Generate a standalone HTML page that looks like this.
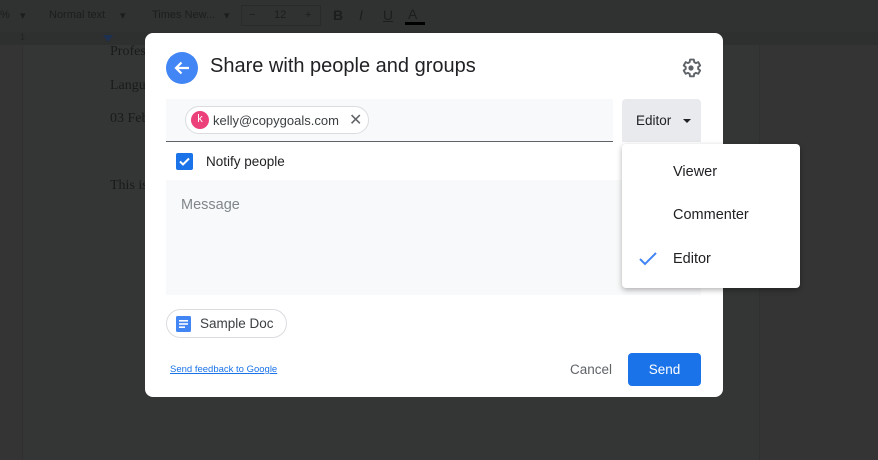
<!DOCTYPE html>
<html><head><meta charset="utf-8"><style>
*{box-sizing:border-box;margin:0;padding:0}
body{width:878px;height:460px;overflow:hidden;background:#333433;font-family:"Liberation Sans",Arial,sans-serif;position:relative}
.tb{position:absolute;left:0;top:0;width:878px;height:32px;background:#303131;color:#1c1d1d;font-size:11px}
.tb span{position:absolute;top:9px}
.ruler{position:absolute;left:0;top:32px;width:878px;height:13px;background:#2e2f2f}
.doc{position:absolute;left:22px;top:45px;width:738px;height:415px;background:#343535;border-left:1px solid #303030;border-right:1px solid #303030}
.dt{position:absolute;font-family:"Liberation Serif",serif;font-size:14px;color:#1a1a1a}
.dlg{position:absolute;left:145px;top:33px;width:578px;height:364px;background:#fff;border-radius:8px}
.a{position:absolute}
.menu{position:absolute;left:622px;top:144px;width:178px;height:144px;background:#fff;border-radius:4px;box-shadow:0 2px 6px rgba(0,0,0,.3);font-size:14.5px;color:#202124}
</style></head><body>
<div class="tb">
<span style="left:0">%</span><span style="left:20px">▾</span>
<span style="left:49px">Normal text</span><span style="left:120px">▾</span>
<span style="left:152px">Times New...</span><span style="left:224px">▾</span>
<div style="position:absolute;left:241px;top:5px;width:80px;height:21px;border:1px solid #2a2a2a"></div>
<span style="left:249px">−</span><span style="left:274px">12</span><span style="left:305px">+</span>
<span style="left:333px;font-weight:bold;font-size:14px;top:7px">B</span><span style="left:359px;font-style:italic;font-size:14px;top:7px">I</span><span style="left:383px;text-decoration:underline;font-size:14px;top:7px">U</span><span style="left:408px;font-size:14px;top:6px">A</span>
<div style="position:absolute;left:405px;top:22px;width:20px;height:3px;background:#000"></div>
</div>
<div class="ruler"><span style="position:absolute;left:20px;top:0;font-size:9px;color:#222">1</span><div style="position:absolute;left:103px;top:3px;border-left:5px solid transparent;border-right:5px solid transparent;border-top:7px solid #1d3050"></div></div>
<div class="doc"></div>
<div class="dt" style="left:110px;top:44px">Profes</div>
<div class="dt" style="left:110px;top:78px">Langu</div>
<div class="dt" style="left:110px;top:111px">03 Feb</div>
<div class="dt" style="left:110px;top:178px">This is</div>

<div class="dlg">
<div class="a" style="left:21px;top:19px;width:32px;height:32px;border-radius:50%;background:#4285f4">
<svg width="32" height="32" viewBox="0 0 32 32"><path d="M23 16H10M15.5 10.5L10 16l5.5 5.5" stroke="#fff" stroke-width="2.2" fill="none"/></svg></div>
<div class="a" style="left:65px;top:22px;font-size:20px;color:#202124">Share with people and groups</div>
<svg class="a" style="left:534px;top:23px" width="24" height="24" viewBox="0 0 24 24"><path fill="none" stroke="#5f6368" stroke-width="1.9" stroke-linejoin="round" d="M19.14 12.94c.04-.3.06-.61.06-.94 0-.32-.02-.64-.07-.94l2.03-1.58-1.92-3.32-2.39.96c-.5-.38-1.03-.7-1.62-.94L14.87 3.6h-3.84l-.36 2.54c-.59.24-1.13.57-1.62.94l-2.39-.96L4.74 9.44l2.03 1.58c-.05.3-.09.63-.09.94s.02.64.07.94l-2.03 1.58 1.92 3.32 2.39-.96c.5.38 1.03.7 1.62.94l.36 2.54h3.84l.36-2.54c.59-.24 1.13-.56 1.62-.94l2.39.96 1.92-3.32z"/><circle cx="12" cy="12" r="2.6" fill="#5f6368"/></svg>
<div class="a" style="left:21px;top:66px;width:447px;height:43px;background:#f8f9fa;border-bottom:1px solid #5f6368"></div>
<div class="a" style="left:40px;top:73px;width:184px;height:28px;border:1px solid #dadce0;border-radius:14px;background:#fff"></div>
<div class="a" style="left:46px;top:78px;width:18px;height:18px;border-radius:50%;background:#ec407a;color:#fff;font-size:11px;text-align:center;line-height:17px">k</div>
<div class="a" style="left:68px;top:80px;font-size:13px;color:#3c4043">kelly@copygoals.com</div>
<div class="a" style="left:204px;top:77px;font-size:16px;color:#5f6368">✕</div>
<div class="a" style="left:477px;top:66px;width:79px;height:43px;background:#e8eaed;border-radius:4px 4px 0 0"></div>
<div class="a" style="left:491px;top:80px;font-size:13.5px;color:#202124">Editor</div>
<div class="a" style="left:538px;top:86px;border-left:4px solid transparent;border-right:4px solid transparent;border-top:4px solid #202124"></div>
<div class="a" style="left:31px;top:120px;width:17px;height:17px;background:#1a73e8;border-radius:2px"><svg width="17" height="17"><path d="M4 8.5l3 3 6-6" stroke="#fff" stroke-width="2" fill="none"/></svg></div>
<div class="a" style="left:61px;top:121px;font-size:13.5px;color:#202124">Notify people</div>
<div class="a" style="left:21px;top:147px;width:535px;height:115px;background:#f8f9fa"></div>
<div class="a" style="left:36px;top:164px;font-size:14.5px;color:#80868b">Message</div>
<div class="a" style="left:21px;top:276px;width:121px;height:29px;border:1px solid #dadce0;border-radius:15px"></div>
<svg class="a" style="left:31px;top:283px" width="15" height="16"><rect width="15" height="16" rx="1.5" fill="#4285f4"/><rect x="3" y="4" width="9" height="1.6" fill="#fff"/><rect x="3" y="7.2" width="9" height="1.6" fill="#fff"/><rect x="3" y="10.4" width="6" height="1.6" fill="#fff"/></svg>
<div class="a" style="left:55px;top:283px;font-size:13.5px;color:#3c4043">Sample Doc</div>
<div class="a" style="left:25px;top:331px;font-size:9.5px;color:#1a73e8;text-decoration:underline">Send feedback to Google</div>
<div class="a" style="left:425px;top:329px;font-size:13.5px;color:#5f6368">Cancel</div>
<div class="a" style="left:483px;top:320px;width:73px;height:33px;background:#1a73e8;border-radius:4px;color:#fff;font-size:13.5px;text-align:center;line-height:33px">Send</div>
</div>

<div class="menu">
<div class="a" style="left:51px;top:20px">Viewer</div>
<div class="a" style="left:51px;top:63px">Commenter</div>
<svg class="a" style="left:17px;top:108px" width="18" height="14"><path d="M1 7l5 5L17 1" stroke="#4285f4" stroke-width="2" fill="none"/></svg>
<div class="a" style="left:51px;top:107px">Editor</div>
</div>
</body></html>
